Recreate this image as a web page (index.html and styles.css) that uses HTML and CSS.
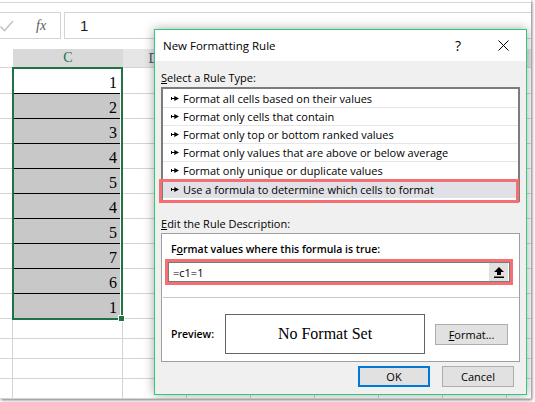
FILE: index.html
```html
<!DOCTYPE html>
<html>
<head>
<meta charset="utf-8">
<link rel="stylesheet" href="styles.css">
</head>
<body>
<div class="screen">
  <div class="fbar">
    <div class="fbox">
      <svg class="check" width="14" height="12" viewBox="0 0 14 12"><polyline points="0.5,6.5 4.5,10.5 13,1"/></svg>
      <span class="fx">fx</span>
    </div>
    <div class="fin"><span>1</span></div>
  </div>
  <div class="sheet">
    <div class="colB">
      <div class="h"></div>
      <div class="r1"></div>
      <div class="r"></div><div class="r"></div><div class="r"></div><div class="r"></div><div class="r"></div><div class="r"></div><div class="r"></div><div class="r"></div><div class="r"></div>
      <div class="s"></div><div class="s"></div><div class="s"></div><div class="s"></div>
    </div>
    <div class="colC">
      <div class="hc">C</div>
      <div class="sel">
        <div class="c1">1</div>
        <div class="cg">2</div>
        <div class="cg">3</div>
        <div class="cg">4</div>
        <div class="cg">5</div>
        <div class="cg">4</div>
        <div class="cg">5</div>
        <div class="cg">7</div>
        <div class="cg">6</div>
        <div class="cg">1</div>
        <span class="handle"></span>
      </div>
      <div class="s first"></div><div class="s"></div><div class="s"></div><div class="s"></div>
    </div>
    <div class="rest">
      <div class="hd"><span class="dl">D</span></div>
      <div class="r1"></div>
      <div class="r"></div><div class="r"></div><div class="r"></div><div class="r"></div><div class="r"></div><div class="r"></div><div class="r"></div><div class="r"></div><div class="r"></div>
      <div class="s"></div><div class="s"></div><div class="s"></div><div class="s"></div>
    </div>
  </div>

  <div class="dlg">
    <div class="tbar">
      <span class="title">New Formatting Rule</span>
      <span class="help">?</span>
      <span class="close"><svg width="11" height="11" viewBox="0 0 11 11"><path d="M0.5 0.5L10.5 10.5M10.5 0.5L0.5 10.5"/></svg></span>
    </div>
    <div class="bd">
      <div class="lbl first-lbl"><u>S</u>elect a Rule Type:</div>
      <div class="list">
        <div class="item"><svg class="ar" width="8" height="5" viewBox="0 0 8 5"><path d="M0 1h1v3H0z M1 2h3v1H1z M3.3 0 L8 2.5 L3.3 5z"/></svg>Format all cells based on their values</div>
        <div class="item"><svg class="ar" width="8" height="5" viewBox="0 0 8 5"><path d="M0 1h1v3H0z M1 2h3v1H1z M3.3 0 L8 2.5 L3.3 5z"/></svg>Format only cells that contain</div>
        <div class="item"><svg class="ar" width="8" height="5" viewBox="0 0 8 5"><path d="M0 1h1v3H0z M1 2h3v1H1z M3.3 0 L8 2.5 L3.3 5z"/></svg>Format only top or bottom ranked values</div>
        <div class="item"><svg class="ar" width="8" height="5" viewBox="0 0 8 5"><path d="M0 1h1v3H0z M1 2h3v1H1z M3.3 0 L8 2.5 L3.3 5z"/></svg>Format only values that are above or below average</div>
        <div class="item"><svg class="ar" width="8" height="5" viewBox="0 0 8 5"><path d="M0 1h1v3H0z M1 2h3v1H1z M3.3 0 L8 2.5 L3.3 5z"/></svg>Format only unique or duplicate values</div>
        <div class="item on"><svg class="ar" width="8" height="5" viewBox="0 0 8 5"><path d="M0 1h1v3H0z M1 2h3v1H1z M3.3 0 L8 2.5 L3.3 5z"/></svg>Use a formula to determine which cells to format<span class="hl"></span></div>
      </div>
      <div class="lbl second-lbl"><u>E</u>dit the Rule Description:</div>
      <div class="desc">
        <div class="flabel">F<u>o</u>rmat values where this formula is true:</div>
        <div class="fwrap">
          <div class="finput">
            <span class="ftext">=c1=1</span>
            <span class="pick"><svg width="10" height="11" viewBox="0 0 10 11"><path d="M5 0L10 5H7V8H3V5H0Z M0 9.5H10V11H0Z"/></svg></span>
          </div>
        </div>
        <div class="sep"></div>
        <div class="prow">
          <span class="plabel">Preview:</span>
          <div class="pbox">No Format Set</div>
          <span class="btn fmt"><u>F</u>ormat...</span>
        </div>
      </div>
      <div class="brow">
        <span class="btn ok">OK</span>
        <span class="btn">Cancel</span>
      </div>
    </div>
  </div>
</div>
</body>
</html>
```
FILE: styles.css
```css
* { box-sizing: border-box; margin: 0; padding: 0; }
body { background: #fff; width: 535px; height: 402px; overflow: hidden; }

.screen {
  position: relative;
  width: 531px;
  height: 399px;
  overflow: hidden;
  background: #fff;
  box-shadow: 1px 1px 3px rgba(0,0,0,0.55);
}

/* formula bar */
.fbar {
  margin-top: 2px;
  height: 47px;
  border-top: 1px solid #d6d6d6;
  padding-top: 9px;
  display: flex;
  align-items: flex-start;
}
.fbox {
  margin-left: -1px;
  width: 62px;
  height: 27px;
  border: 1px solid #d4d4d4;
  display: flex;
  align-items: center;
}
.check polyline { fill: none; stroke: #c4c4c4; stroke-width: 1.6; }
.fx {
  margin-left: 22px;
  font-family: "Liberation Serif", serif;
  font-style: italic;
  font-size: 14px;
  color: #5a5a5a;
}
.fin {
  margin-left: 3px;
  flex: 1;
  height: 27px;
  border: 1px solid #d4d4d4;
  border-right: none;
  display: flex;
  align-items: center;
  padding-left: 15px;
  font-family: "Liberation Sans", sans-serif;
  font-size: 15px;
  color: #1e1e1e;
}

/* sheet */
.sheet { display: flex; height: 350px; }
.colB { width: 13px; }
.colB .h { height: 19px; border-bottom: 1px solid #d4d4d4; }
.colB .r1, .colB .r, .colB .s { border-right: 1px solid #d4d4d4; border-bottom: 1px solid #d4d4d4; }
.r1 { height: 26px; border-bottom: 1px solid #d4d4d4; }
.r { height: 25px; border-bottom: 1px solid #d4d4d4; }
.s { height: 20px; border-bottom: 1px solid #d4d4d4; }

.colC { width: 110px; }
.hc {
  height: 18px;
  background: #d9d9d9;
  text-align: center;
  font-family: "Liberation Serif", serif;
  font-size: 14px;
  line-height: 18px;
  color: #217346;
}
.sel {
  position: relative;
  margin-left: -1px;
  width: 111px;
  border: 2px solid #217346;
  font-family: "Liberation Serif", serif;
  font-size: 16px;
  line-height: 1;
  color: #000;
}
.c1, .cg {
  display: flex;
  align-items: flex-end;
  justify-content: flex-end;
  padding: 0 3px 2px 0;
}
.c1 { height: 24px; margin-right: 1px; }
.cg { height: 25px; border-top: 1px solid #000; background: #c8c8c8; margin-right: 1px; }
.handle {
  position: absolute;
  right: -4px;
  bottom: -4px;
  width: 7px;
  height: 7px;
  background: #217346;
  border: 1px solid #fff;
}
.colC .s { border-right: 1px solid #d4d4d4; }
.colC .s.first { height: 19px; }

.rest {
  flex: 1;
  background: repeating-linear-gradient(to right, transparent 0 63px, #d4d4d4 63px 64px);
}
.hd {
  height: 19px;
  border-bottom: 1px solid #d4d4d4;
  background: repeating-linear-gradient(to right, #e6e6e6 0 63px, #c9c9c9 63px 64px);
}
.dl {
  display: inline-block;
  width: 61px;
  text-align: center;
  font-family: "Liberation Serif", serif;
  font-size: 14px;
  line-height: 18px;
  color: #44546a;
}

/* dialog */
.dlg {
  position: absolute;
  left: 154px;
  top: 29px;
  width: 373px;
  height: 366px;
  border: 1px solid #2fcb78;
  background: #f0f0f0;
  box-shadow: 0 0 10px rgba(0,0,0,0.35);
  font-family: "Open Sans", "Noto Sans", sans-serif;
  font-size: 11px;
  color: #000;
  display: flex;
  flex-direction: column;
}
.tbar {
  height: 31px;
  background: #fff;
  display: flex;
  align-items: center;
  padding-left: 8px;
}
.title { flex: 1; font-size: 11.5px; }
.help { width: 30px; margin-right: 7px; text-align: center; font-size: 14px; }
.close { width: 46px; display: flex; justify-content: center; align-items: center; }
.close path { stroke: #000; stroke-width: 1; fill: none; }

.bd { flex: 1; padding: 0 6px; display: flex; flex-direction: column; }
.lbl { height: 16px; line-height: 16px; }
.first-lbl { margin-top: 9px; }
.second-lbl { margin-top: 14px; }

.list {
  margin-top: 1px;
  height: 115px;
  border: 2px solid #7c7c7c;
  background: #fff;
  padding-top: 1px;
}
.item {
  position: relative;
  height: 18px;
  border-bottom: 1px solid #e6e6e6;
  display: flex;
  align-items: center;
  padding-left: 8px;
}
.item.on { background: #e0e0e6; border-bottom: none; }
.ar { margin-right: 4px; fill: #000; }
.hl {
  position: absolute;
  left: -4px;
  right: -1px;
  top: -1px;
  bottom: -5px;
  border: 3px solid #f36f71;
}

.desc {
  margin-top: 1px;
  height: 129px;
  border: 1px solid #9f9f9f;
  background: #fff;
  display: flex;
  flex-direction: column;
}
.flabel { margin: 7px 0 0 9px; height: 16px; line-height: 16px; font-weight: 600; font-size: 10.5px; }
.fwrap {
  margin: 2px 6px 0 3px;
  height: 26px;
  border: 3px solid #f36f71;
}
.finput {
  height: 20px;
  border: 1px solid #7a7a7a;
  background: #fff;
  display: flex;
  align-items: center;
}
.ftext { flex: 1; padding-left: 4px; }
.pick {
  width: 19px;
  height: 18px;
  margin-right: 1px;
  background: #e1e1e1;
  display: flex;
  align-items: center;
  justify-content: center;
}
.pick path { fill: #000; }
.sep { margin: 12px 0 0 1px; height: 1px; background: #c8c8c8; }
.prow { margin-top: 16px; display: flex; align-items: center; }
.plabel { width: 63px; padding-left: 9px; font-weight: 600; font-size: 10.5px; }
.pbox {
  width: 200px;
  height: 40px;
  border: 1px solid #646464;
  display: flex;
  align-items: center;
  justify-content: center;
  font-family: "Liberation Serif", serif;
  font-size: 16px;
}
.btn {
  width: 72px;
  height: 21px;
  background: #e1e1e1;
  border: 1px solid #adadad;
  display: flex;
  align-items: center;
  justify-content: center;
}
.fmt { margin-left: 10px; width: 73px; height: 21px; }
.brow { margin-top: 4px; display: flex; justify-content: flex-end; gap: 12px; padding-right: 6px; }
.ok { border: 2px solid #0078d7; }
```
